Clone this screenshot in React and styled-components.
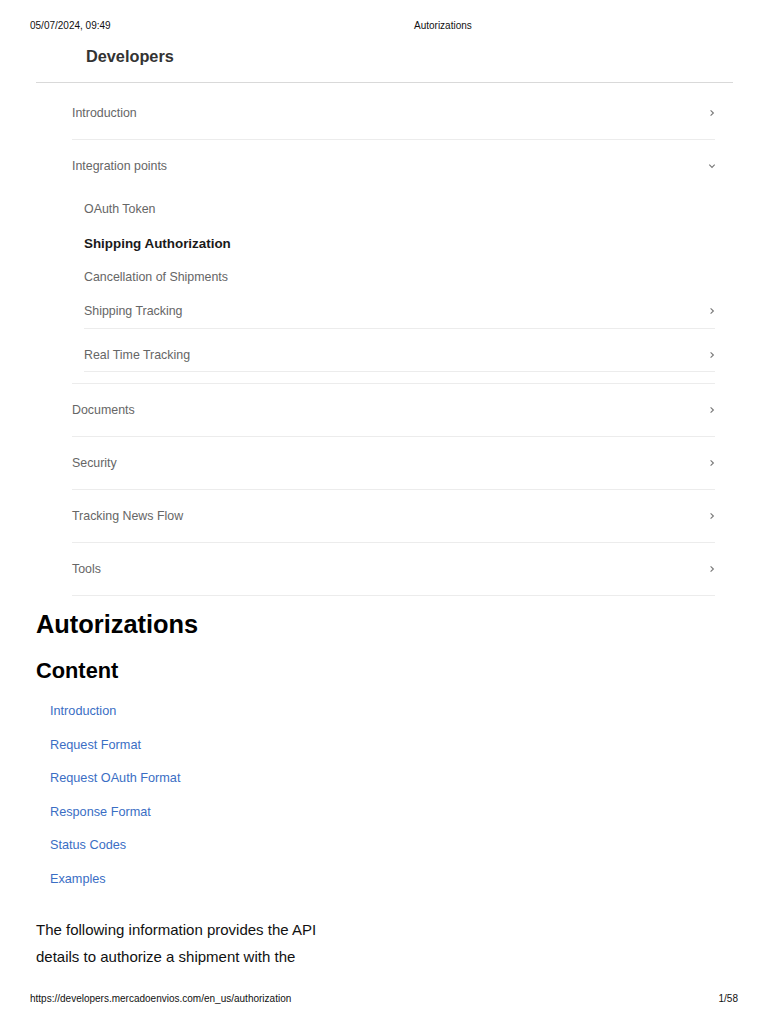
import React from 'react';
import styled, { createGlobalStyle } from 'styled-components';

const GlobalStyle = createGlobalStyle`
  html, body {
    margin: 0;
    padding: 0;
    background: #fff;
  }
  body {
    font-family: "Liberation Sans", Arial, sans-serif;
  }
`;

const Page = styled.div`
  width: 768px;
  height: 1024px;
  display: flex;
  flex-direction: column;
  overflow: hidden;
  background: #fff;
`;

const PrintBar = styled.div`
  display: grid;
  grid-template-columns: 384px 1fr;
  align-items: center;
  padding: 0 30px;
  height: 12px;
  margin-top: ${({ top }) => top}px;
  font-size: 10px;
  color: #111;
`;

const Main = styled.div`
  padding: 0 35px 0 36px;
`;

const TopBar = styled.div`
  height: 45px;
  margin-top: 7px;
  display: flex;
  align-items: center;
  padding: 0 0 7px 50px;
  box-sizing: border-box;
  border-bottom: 1px solid #d9d9d9;
  font-weight: 700;
  font-size: 16.3px;
  color: #333;
`;

const Nav = styled.nav`
  margin: 4px 18px 0 36px;
`;

const Row = styled.div`
  display: flex;
  align-items: center;
  justify-content: space-between;
  height: ${({ h }) => h || 52}px;
  padding-top: ${({ pt }) => pt || 0}px;
  box-sizing: content-box;
  border-bottom: ${({ line }) => (line ? '1px solid #ececec' : 'none')};
  font-size: ${({ strong }) => (strong ? 13.4 : 12.4)}px;
  color: ${({ strong }) => (strong ? '#1a1a1a' : '#666')};
  font-weight: ${({ strong }) => (strong ? 700 : 400)};
`;

const Group = styled.div`
  border-bottom: 1px solid #ececec;
  padding-bottom: 11px;
`;

const SubList = styled.div`
  margin-left: 12px;
`;

const Chevron = ({ down }) => (
  <svg width="8" height="8" viewBox="0 0 8 8" style={{ marginRight: -1 }}>
    <path
      d={down ? 'M1.3 2.6 L4 5.4 L6.7 2.6' : 'M2.6 1.3 L5.4 4 L2.6 6.7'}
      fill="none"
      stroke="#777"
      strokeWidth="1.1"
    />
  </svg>
);

const Title = styled.h1`
  margin: 13px 0 0;
  font-size: 25.4px;
  line-height: 30px;
  font-weight: 700;
  color: #000;
`;

const SubTitle = styled.h2`
  margin: 19px 0 0;
  font-size: 21.8px;
  line-height: 26px;
  font-weight: 700;
  color: #000;
`;

const LinkList = styled.ul`
  list-style: none;
  margin: 19px 0 0;
  padding: 0 0 0 14px;
`;

const LinkItem = styled.li`
  height: 33.5px;
  line-height: 16px;
  font-size: 12.7px;
  color: #3a6ec4;
`;

const Paragraph = styled.p`
  margin: 12px 0 0;
  width: 300px;
  font-size: 15px;
  line-height: 27px;
  color: #111;
`;

const Footer = styled(PrintBar)`
  display: flex;
  justify-content: space-between;
  margin-top: auto;
  margin-bottom: 20px;
`;

const navBottom = ['Documents', 'Security', 'Tracking News Flow', 'Tools'];
const subPlain = [
  { label: 'OAuth Token' },
  { label: 'Shipping Authorization', strong: true },
  { label: 'Cancellation of Shipments' },
];
const links = [
  'Introduction',
  'Request Format',
  'Request OAuth Format',
  'Response Format',
  'Status Codes',
  'Examples',
];

export default function App() {
  return (
    <Page>
      <GlobalStyle />
      <PrintBar top={19}>
        <span>05/07/2024, 09:49</span>
        <span>Autorizations</span>
      </PrintBar>
      <Main>
        <TopBar>Developers</TopBar>
        <Nav>
          <Row line>
            <span>Introduction</span>
            <Chevron />
          </Row>
          <Group>
            <Row>
              <span>Integration points</span>
              <Chevron down />
            </Row>
            <SubList>
              {subPlain.map((s) => (
                <Row key={s.label} h={34} strong={s.strong}>
                  <span>{s.label}</span>
                </Row>
              ))}
              <Row h={34} line>
                <span>Shipping Tracking</span>
                <Chevron />
              </Row>
              <Row h={33} pt={9} line>
                <span>Real Time Tracking</span>
                <Chevron />
              </Row>
            </SubList>
          </Group>
          {navBottom.map((n) => (
            <Row key={n} line>
              <span>{n}</span>
              <Chevron />
            </Row>
          ))}
        </Nav>
        <Title>Autorizations</Title>
        <SubTitle>Content</SubTitle>
        <LinkList>
          {links.map((l) => (
            <LinkItem key={l}>{l}</LinkItem>
          ))}
        </LinkList>
        <Paragraph>
          The following information provides the API details to authorize a shipment with the
        </Paragraph>
      </Main>
      <Footer>
        <span>https://developers.mercadoenvios.com/en_us/authorization</span>
        <span>1/58</span>
      </Footer>
    </Page>
  );
}
